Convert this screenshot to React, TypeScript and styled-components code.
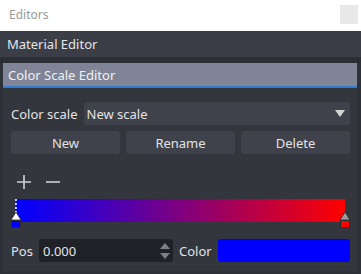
import styled, { createGlobalStyle } from "styled-components";

const GlobalStyle = createGlobalStyle`
    html, body {
        margin: 0;
        padding: 0;
        background: #2e3137;
    }
    * {
        box-sizing: border-box;
    }
`

type Stop = {
    pos: number
    color: string
    selected: boolean
}

const stops: Stop[] = [
    {pos: 0, color: "#0000ff", selected: true},
    {pos: 1, color: "#ff0000", selected: false},
]

function StopMarker({stop}: { stop: Stop }) {
    return (
        <Marker style={{left: `${stop.pos * 100}%`}} $selected={stop.selected}>
            <svg width="12" height="30" viewBox="0 0 12 30">
                {stop.selected && (
                    <line x1="6" y1="0" x2="6" y2="14" stroke="#ffffff" strokeWidth="1.5" strokeDasharray="2 2"/>
                )}
                <polygon points="6,13 1,21 11,21" fill={stop.selected ? "#ffffff" : "#9c9c9c"} stroke="#2a2a2a" strokeWidth="0.8"/>
                <rect x="1.5" y="21.5" width="9" height="7" fill={stop.color} stroke="#2a2a2a" strokeWidth="1"/>
            </svg>
        </Marker>
    )
}

export default function App() {
    return (
        <>
            <GlobalStyle/>
            <Window>
                <TitleBar>
                    <span>Editors</span>
                    <CloseButton/>
                </TitleBar>
                <ToolHeader>Material Editor</ToolHeader>
                <Spacer/>
                <ToolHeader $active>Color Scale Editor</ToolHeader>
                <Panel>
                    <Row>
                        <Label>Color scale</Label>
                        <Combo>
                            <span>New scale</span>
                            <svg width="10" height="7" viewBox="0 0 10 7">
                                <polygon points="0,0 10,0 5,7" fill="#d6d6d6"/>
                            </svg>
                        </Combo>
                    </Row>
                    <ButtonRow>
                        <Button>New</Button>
                        <Button>Rename</Button>
                        <Button>Delete</Button>
                    </ButtonRow>
                    <IconRow>
                        <svg width="16" height="16" viewBox="0 0 16 16">
                            <path d="M8 1v14M1 8h14" stroke="#cfd0d2" strokeWidth="1.6"/>
                        </svg>
                        <svg width="16" height="16" viewBox="0 0 16 16">
                            <path d="M1 8h14" stroke="#cfd0d2" strokeWidth="1.6"/>
                        </svg>
                    </IconRow>
                    <GradientArea>
                        <GradientBar/>
                        {stops.map((s) => <StopMarker key={s.pos} stop={s}/>)}
                    </GradientArea>
                    <Row>
                        <Label>Pos</Label>
                        <SpinBox>
                            <span>0.000</span>
                            <svg width="10" height="18" viewBox="0 0 10 18">
                                <polygon points="5,1 10,7 0,7" fill="#7d8085"/>
                                <polygon points="0,11 10,11 5,17" fill="#7d8085"/>
                            </svg>
                        </SpinBox>
                        <Label>Color</Label>
                        <Swatch $color="#0000ff"/>
                    </Row>
                </Panel>
            </Window>
        </>
    )
}

const Window = styled.div`
    width: 361px;
    height: 274px;
    display: flex;
    flex-direction: column;
    background: #2e3137;
    font-family: "Noto Sans", "Open Sans", sans-serif;
    font-size: 13px;
    color: #e2e3e5;
    overflow: hidden;
`

const TitleBar = styled.div`
    height: 31px;
    flex: none;
    background: #ffffff;
    display: flex;
    align-items: center;
    justify-content: space-between;
    padding: 0 3px 2px 9px;
    color: #9a9a9a;
    font-size: 12px;
`

const CloseButton = styled.div`
    width: 18px;
    height: 19px;
    background: #e8e8e8;
`

const ToolHeader = styled.div<{ $active?: boolean }>`
    flex: none;
    height: ${p => p.$active ? "25px" : "26px"};
    margin: ${p => p.$active ? "0 4px 0 3px" : "0"};
    padding: ${p => p.$active ? "0 5px" : "0 7px"};
    display: flex;
    align-items: center;
    background: ${p => p.$active ? "#7f8596" : "#3b3e47"};
    border-bottom: ${p => p.$active ? "2px solid #2f7dd3" : "none"};
    color: ${p => p.$active ? "#f0f1f3" : "#e4e5e7"};
`

const Spacer = styled.div`
    flex: none;
    height: 6px;
    background: #2b2e34;
`

const Panel = styled.div`
    flex: 1;
    margin: 0 4px 3px 3px;
    background: #33363d;
    display: flex;
    flex-direction: column;
    padding: 14px 7px 0 8px;
    gap: 6px;
`

const Row = styled.div`
    display: flex;
    align-items: center;
    gap: 6px;
    height: 23px;
`

const Label = styled.span`
    flex: none;
    color: #e2e3e5;
`

const Combo = styled.div`
    flex: 1;
    height: 23px;
    display: flex;
    align-items: center;
    justify-content: space-between;
    padding: 0 5px 0 3px;
    border-radius: 3px;
    background: #3f424b;
`

const ButtonRow = styled.div`
    display: grid;
    grid-template-columns: repeat(3, 1fr);
    gap: 6px;
`

const Button = styled.div`
    height: 23px;
    display: flex;
    align-items: center;
    justify-content: center;
    border-radius: 3px;
    background: #3f424b;
`

const IconRow = styled.div`
    display: flex;
    gap: 13px;
    margin-top: 14px;
    padding-left: 5px;
    height: 16px;
    align-items: center;
`

const GradientArea = styled.div`
    position: relative;
    height: 29px;
    margin: 3px 5px 5px 5px;
`

const GradientBar = styled.div`
    height: 23px;
    background: linear-gradient(to right, #0000ff, #ff0000);
`

const Marker = styled.div<{ $selected: boolean }>`
    position: absolute;
    top: 0;
    width: 12px;
    height: 30px;
    transform: translateX(-6px);
    z-index: ${p => p.$selected ? 2 : 1};
    svg {
        display: block;
    }
`

const SpinBox = styled.div`
    width: 134px;
    height: 23px;
    display: flex;
    align-items: center;
    justify-content: space-between;
    padding: 0 3px 0 4px;
    border-radius: 3px;
    background: #1f2126;
`

const Swatch = styled.div<{ $color: string }>`
    flex: 1;
    height: 23px;
    border-radius: 3px;
    background: ${p => p.$color};
`
